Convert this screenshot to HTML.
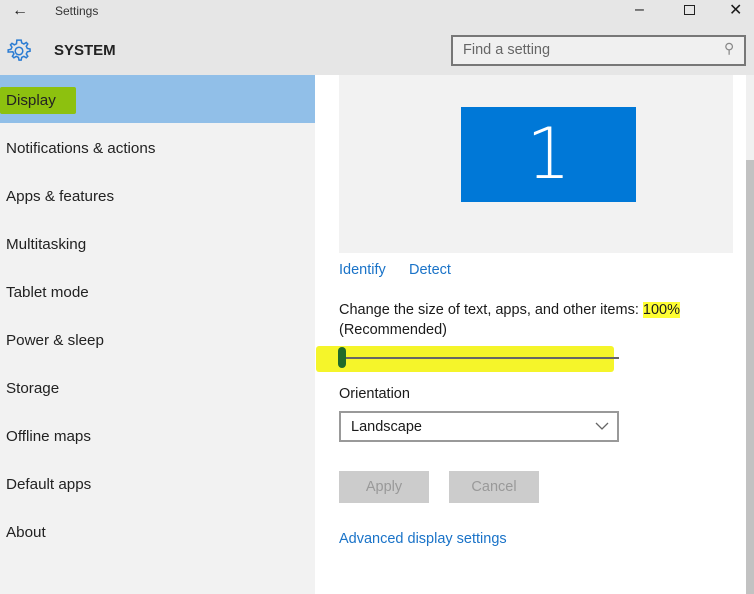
<!DOCTYPE html>
<html><head><meta charset="utf-8"><style>
*{margin:0;padding:0;box-sizing:border-box}
body{width:754px;height:594px;overflow:hidden;background:#fff;font-family:"Liberation Sans",sans-serif;position:relative;color:#1a1a1a}
.a{position:absolute}
.nav{font-size:15.2px;left:6px;color:#222}
</style></head><body>
<div class="a" style="left:0;top:0;width:754px;height:75px;background:#e6e6e6"></div>
<div class="a" style="left:12px;top:2px;font-size:16px">&#8592;</div>
<div class="a" style="left:55px;top:4px;font-size:12px;color:#333">Settings</div>
<div class="a" style="left:635px;top:1px;font-size:16px">&#8211;</div>
<div class="a" style="left:684px;top:5px;width:11px;height:10px;border:1.5px solid #222"></div>
<div class="a" style="left:729px;top:0px;font-size:16px">&#10005;</div>
<svg class="a" style="left:6px;top:38px" width="26" height="26" viewBox="0 0 24 24"><path d="M12 2l2 0 .5 2.5 2 1 2.2-1.4 1.4 1.4-1.4 2.2 1 2 2.5.5v2l-2.5.5-1 2 1.4 2.2-1.4 1.4-2.2-1.4-2 1-.5 2.5h-2l-.5-2.5-2-1-2.2 1.4-1.4-1.4 1.4-2.2-1-2L2 13v-2l2.5-.5 1-2L4.1 6.3l1.4-1.4 2.2 1.4 2-1L10 2z" fill="none" stroke="#2b7cd3" stroke-width="1.4"/><circle cx="12" cy="12" r="3.5" fill="none" stroke="#2b7cd3" stroke-width="1.4"/></svg>
<div class="a" style="left:54px;top:42px;font-size:15px;font-weight:bold;color:#222">SYSTEM</div>
<div class="a" style="left:451px;top:35px;width:295px;height:31px;border:2px solid #777;background:#f0f0f0"></div>
<div class="a" style="left:463px;top:42px;font-size:14.5px;color:#666">Find a setting</div>
<div class="a" style="left:724px;top:40px;font-size:14px;color:#888">&#9906;</div>
<div class="a" style="left:0;top:75px;width:315px;height:519px;background:#f2f2f2"></div>
<div class="a" style="left:0;top:75px;width:315px;height:48px;background:#91bfe8"></div>
<div class="a" style="left:0;top:87px;width:76px;height:27px;background:#8dc10f;border-radius:2px"></div>
<div class="a nav" style="top:92px">Display</div>
<div class="a nav" style="top:140px">Notifications &amp; actions</div>
<div class="a nav" style="top:188px">Apps &amp; features</div>
<div class="a nav" style="top:236px">Multitasking</div>
<div class="a nav" style="top:284px">Tablet mode</div>
<div class="a nav" style="top:332px">Power &amp; sleep</div>
<div class="a nav" style="top:380px">Storage</div>
<div class="a nav" style="top:428px">Offline maps</div>
<div class="a nav" style="top:476px">Default apps</div>
<div class="a nav" style="top:524px">About</div>
<div class="a" style="left:339px;top:75px;width:394px;height:178px;background:#f2f2f2"></div>
<div class="a" style="left:461px;top:107px;width:175px;height:95px;background:#0078d7;color:#fff;font-size:70px;font-weight:100;text-align:center;line-height:95px;font-family:'DejaVu Sans',sans-serif;font-weight:200">1</div>
<div class="a" style="left:746px;top:75px;width:8px;height:519px;background:#f0f0f0"></div>
<div class="a" style="left:746px;top:160px;width:8px;height:434px;background:#c2c2c2"></div>
<div class="a" style="left:339px;top:262px;font-size:14.5px;color:#1a73c8">Identify</div>
<div class="a" style="left:409px;top:262px;font-size:14.5px;color:#1a73c8">Detect</div>
<div class="a" style="left:339px;top:302px;font-size:14.5px">Change the size of text, apps, and other items: <span style="background:#ffff33">100%</span></div>
<div class="a" style="left:339px;top:322px;font-size:14.5px">(Recommended)</div>
<div class="a" style="left:316px;top:346px;width:298px;height:26px;background:#f5f52a;border-radius:3px"></div>
<div class="a" style="left:341px;top:357px;width:278px;height:2px;background:#666"></div>
<div class="a" style="left:338px;top:347px;width:8px;height:21px;background:#1f6b2a;border-radius:4px"></div>
<div class="a" style="left:339px;top:386px;font-size:14.5px">Orientation</div>
<div class="a" style="left:339px;top:411px;width:280px;height:31px;border:2px solid #999"></div>
<div class="a" style="left:351px;top:419px;font-size:14.5px">Landscape</div>
<svg class="a" style="left:595px;top:421px" width="14" height="10"><path d="M1 2l6 6 6-6" fill="none" stroke="#666" stroke-width="1.3"/></svg>
<div class="a" style="left:339px;top:471px;width:90px;height:32px;background:#ccc;color:#999;font-size:14.5px;text-align:center;line-height:32px">Apply</div>
<div class="a" style="left:449px;top:471px;width:90px;height:32px;background:#ccc;color:#999;font-size:14.5px;text-align:center;line-height:32px">Cancel</div>
<div class="a" style="left:339px;top:531px;font-size:14.5px;color:#1a73c8">Advanced display settings</div>
</body></html>
